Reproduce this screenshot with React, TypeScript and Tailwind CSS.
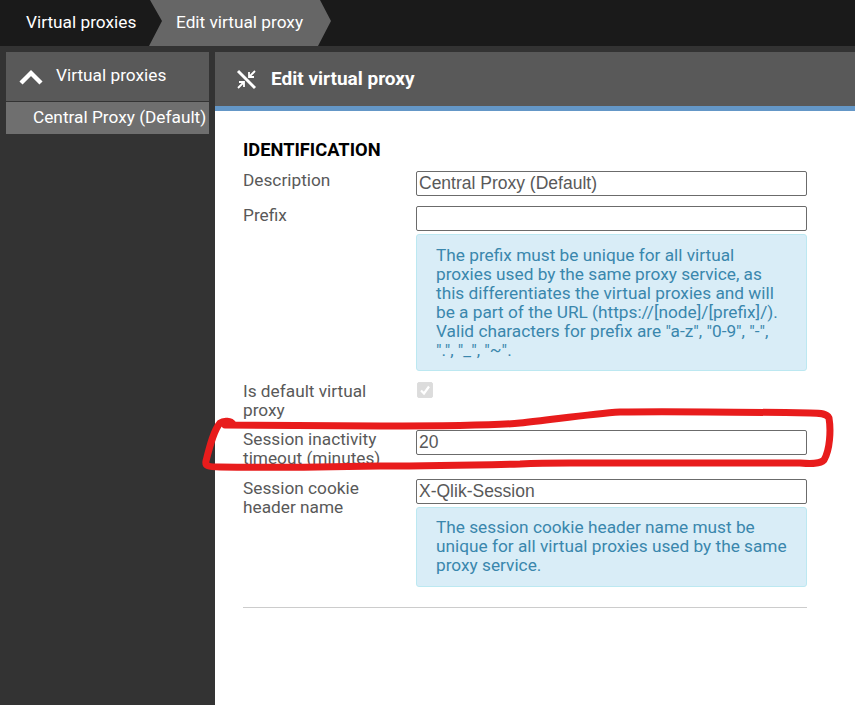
import React from "react";

const sans = "font-['Roboto',sans-serif]";

function Row({ label, children, className = "" }: { label: string; children?: React.ReactNode; className?: string }) {
  return (
    <div className={`flex ${className}`}>
      <div className="mr-[28px] w-[145px] shrink-0 text-[17.25px] leading-[19px] text-[#595959]">{label}</div>
      <div className="w-[391px] shrink-0">{children}</div>
    </div>
  );
}

function Field({ value }: { value: string }) {
  return (
    <div className="flex h-[25px] items-center rounded-[2px] border border-[#6b6b6b] bg-white pl-[2px] font-['Liberation_Sans',sans-serif] text-[17.5px] text-[#595959]">
      {value}
    </div>
  );
}

function Info({ children, className = "" }: { children: React.ReactNode; className?: string }) {
  return (
    <div className={`mt-[3px] rounded-[3px] border border-[#bce8f1] bg-[#d9edf7] pl-[19px] text-[17.25px] leading-[19px] text-[#3a87ad] ${className}`}>
      {children}
    </div>
  );
}

export default function App() {
  return (
    <div className={`relative flex h-[705px] w-[855px] flex-col overflow-hidden bg-[#333333] ${sans}`}>
      <div className="flex h-[46px] shrink-0 bg-[#1a1a1a] text-[17.25px] text-white">
        <div className="flex w-[149px] items-center pl-[26px]">Virtual proxies</div>
        <div className="flex w-[182px] items-center bg-[#666666] pl-[27px] [clip-path:polygon(1px_0,171px_0,182px_21px,169px_46px,0_46px,13px_21px)]">
          Edit virtual proxy
        </div>
      </div>
      <div className="flex min-h-0 flex-1 pt-[6px]">
        <aside className="w-[215px] shrink-0 pl-[6px] pr-[6px]">
          <div className="flex h-[49px] items-center gap-[13px] bg-[#595959] pl-[13px] text-[17.25px] text-white">
            <svg width="24" height="16" viewBox="0 0 24 16" fill="none" stroke="white" strokeWidth="4.4">
              <path d="M2 14 L12 4 L22 14" />
            </svg>
            <span className="relative top-[-1px]">Virtual proxies</span>
          </div>
          <div className="mt-px flex h-[32px] items-center whitespace-nowrap bg-[#6f6f6f] pl-[27px] text-[17.25px] text-white">
            Central Proxy (Default)
          </div>
        </aside>
        <main className="flex-1 bg-white">
          <div className="flex h-[54px] items-center gap-[13px] bg-[#595959] pl-[20px] text-[19px] font-bold text-white">
            <svg width="23" height="23" viewBox="0 0 23 23" fill="none" stroke="white">
              <path d="M3 3 L20 20" strokeWidth="3" />
              <path d="M20 3 L14 9 M14 4 V9 H19" strokeWidth="1.8" />
              <path d="M3 20 L9 14 M4 14 H9 V19" strokeWidth="1.8" />
            </svg>
            <span>Edit virtual proxy</span>
          </div>
          <div className="h-[5px] bg-[#6497c7]" />
          <div className="pl-[28px] pt-[29px]">
            <h2 className="text-[18.3px] font-bold leading-[19px] text-black">IDENTIFICATION</h2>
            <Row label="Description" className="mt-[12px]">
              <Field value="Central Proxy (Default)" />
            </Row>
            <Row label="Prefix" className="mt-[10px]">
              <Field value="" />
              <Info className="h-[137px] pr-[21px] pt-[11px]">
                The prefix must be unique for all virtual proxies used by the same proxy service, as this differentiates the virtual proxies and will be a part of the URL (https://[node]/[prefix]/). Valid characters for prefix are "a-z", "0-9", "-", ".", "_", "~".
              </Info>
            </Row>
            <Row label="Is default virtual proxy" className="mt-[11px]">
              <div className="ml-px flex h-[16px] w-[16px] items-center justify-center rounded-[2px] border border-[#dddddd] bg-[#dcdcdc]">
                <svg width="12" height="12" viewBox="0 0 12 12" fill="none" stroke="white" strokeWidth="2.2">
                  <path d="M2 6.5 L5 9.5 L10 2.5" />
                </svg>
              </div>
            </Row>
            <Row label="Session inactivity timeout (minutes)" className="mt-[10px]">
              <Field value="20" />
            </Row>
            <Row label="Session cookie header name" className="mt-[11px]">
              <Field value="X-Qlik-Session" />
              <Info className="h-[80px] pr-[12px] pt-[10px]">
                The session cookie header name must be unique for all virtual proxies used by the same proxy service.
              </Info>
            </Row>
            <div className="mt-[20px] h-px w-[564px] bg-[#cccccc]" />
          </div>
        </main>
      </div>
      <svg className="pointer-events-none absolute left-0 top-0" width="855" height="705" viewBox="0 0 855 705" fill="none">
        <path
          d="M233 424 C231 421 224 420 220 423 C214 430 210 445 206 461 C205 466 208 467 220 467 C280 468 330 467 380 466 C430 466 480 465 520 464 C540 463 550 463 570 463 C650 463 730 463 800 463 C812 464 820 464 824 460 C830 450 831 430 829 418 C827 414 822 413 810 413 C740 412 660 411 620 412 C590 414 550 420 520 423 C490 426 440 426 380 426 C320 426 270 425 225 425"
          stroke="#e81c1c"
          strokeWidth="7"
          strokeLinecap="round"
          strokeLinejoin="round"
        />
      </svg>
    </div>
  );
}
